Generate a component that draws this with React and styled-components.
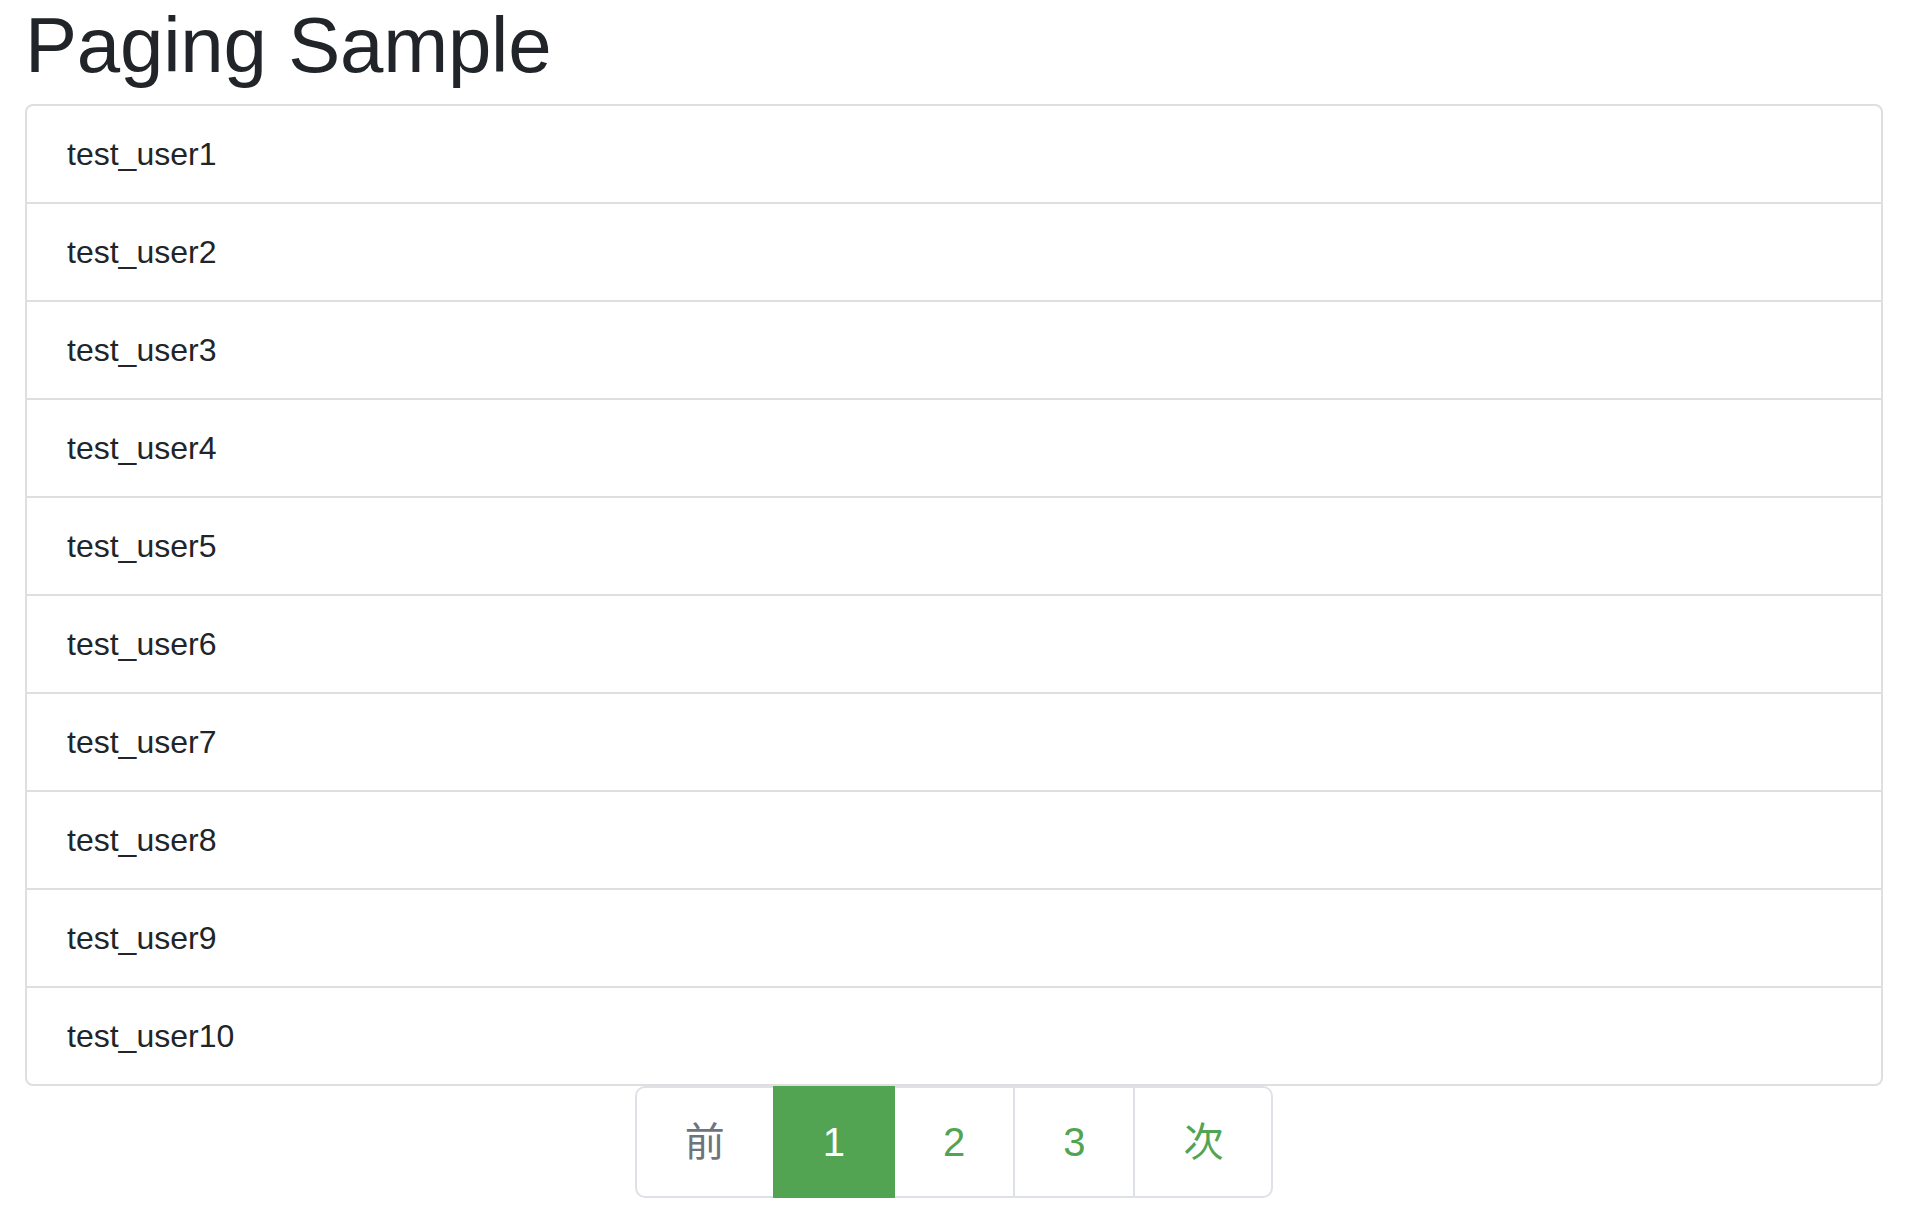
import React, { useState } from "react";
import styled, { createGlobalStyle } from "styled-components";

const users = Array.from({ length: 10 }, (_, i) => `test_user${i + 1}`);

const GlobalStyle = createGlobalStyle`
  body {
    margin: 0;
    background: #fff;
    color: #212529;
    font-family: "Liberation Sans", Arial, "Noto Sans CJK JP", sans-serif;
  }
`;

function App() {
  const [page, setPage] = useState(1);
  const pages = [1, 2, 3];

  return (
    <Container>
      <GlobalStyle />
      <Title>Paging Sample</Title>
      <ListGroup>
        {users.map((name) => (
          <ListItem key={name}>{name}</ListItem>
        ))}
      </ListGroup>
      <Pagination>
        <PageItem disabled first>前</PageItem>
        {pages.map((p) => (
          <PageItem key={p} active={p === page} onClick={() => setPage(p)}>
            {p}
          </PageItem>
        ))}
        <PageItem last onClick={() => page < 3 && setPage(page + 1)}>
          次
        </PageItem>
      </Pagination>
    </Container>
  );
}

export default App;

const Container = styled.div`
  padding: 0 39px 0 25px;
`;

const Title = styled.h1`
  margin: 0 0 14px;
  font-size: 78px;
  font-weight: 400;
  line-height: 90px;
  letter-spacing: -0.2px;
`;

const ListGroup = styled.ul`
  margin: 0;
  padding: 0;
  list-style: none;
  border: 2px solid #dfdfdf;
  border-radius: 8px;
  overflow: hidden;
`;

const ListItem = styled.li`
  padding: 24px 40px;
  font-size: 32px;
  line-height: 48px;
  color: #212529;
  border-top: 2px solid #dfdfdf;
  &:first-child {
    border-top: none;
  }
`;

const Pagination = styled.div`
  display: flex;
  justify-content: center;
`;

const PageItem = styled.div`
  padding: 24px 48px;
  height: 60px;
  font-size: 40px;
  line-height: 60px;
  font-family: "Liberation Sans", Arial, "Noto Sans CJK JP", sans-serif;
  margin-left: -2px;
  border: 2px solid ${({ active }) => (active ? "#52a452" : "#dee2e6")};
  background: ${({ active }) => (active ? "#52a452" : "#fff")};
  color: ${({ active, disabled }) =>
    active ? "#fff" : disabled ? "#6c757d" : "#52a452"};
  position: relative;
  z-index: ${({ active }) => (active ? 1 : 0)};
  cursor: ${({ disabled }) => (disabled ? "default" : "pointer")};
  border-radius: ${({ first, last }) =>
    first ? "10px 0 0 10px" : last ? "0 10px 10px 0" : "0"};
  ${({ first }) => first && "margin-left: 0;"}
`;
